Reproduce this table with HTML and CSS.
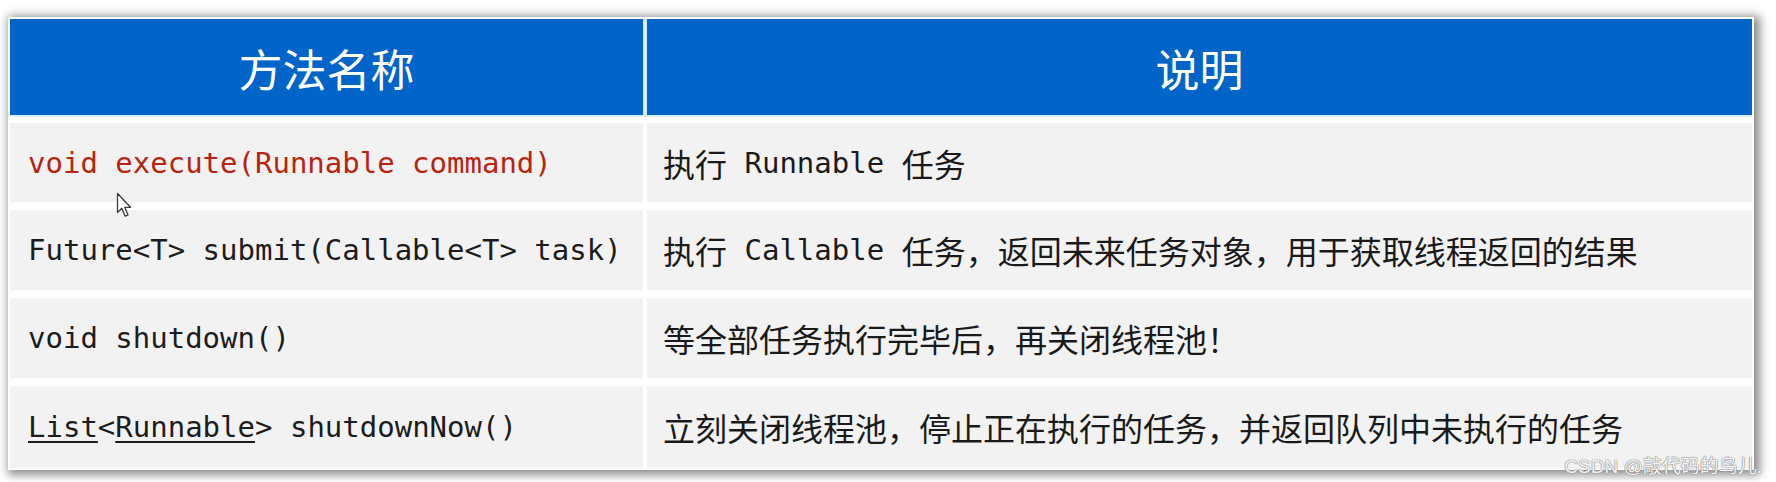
FILE: index.html
```html
<!DOCTYPE html>
<html lang="zh">
<head>
<meta charset="utf-8">
<title>线程池方法</title>
<link rel="stylesheet" href="styles.css">
</head>
<body>
<div class="page">
  <div class="table">
    <div class="row head">
      <div class="cell">方法名称</div>
      <div class="cell">说明</div>
    </div>
    <div class="row r1">
      <div class="cell code red">void execute(Runnable command)</div>
      <div class="cell desc">执行<span class="mono"> Runnable </span>任务</div>
    </div>
    <div class="row r2">
      <div class="cell code">Future&lt;T&gt; submit(Callable&lt;T&gt; task)</div>
      <div class="cell desc">执行<span class="mono"> Callable </span>任务，返回未来任务对象，用于获取线程返回的结果</div>
    </div>
    <div class="row r3">
      <div class="cell code">void shutdown()</div>
      <div class="cell desc">等全部任务执行完毕后，再关闭线程池！</div>
    </div>
    <div class="row r4">
      <div class="cell code"><span class="u">List</span>&lt;<span class="u">Runnable</span>&gt; shutdownNow()</div>
      <div class="cell desc">立刻关闭线程池，停止正在执行的任务，并返回队列中未执行的任务</div>
    </div>
  </div>
  <svg class="cursor" width="18" height="27" viewBox="0 0 18 27">
    <path d="M1.5 1.5 L1.5 20.5 L5.8 16.3 L9.2 24.2 L12 23 L8.7 15.3 L14.6 15.3 Z" fill="#ffffff" stroke="#3a3a3a" stroke-width="1.3" stroke-linejoin="round"/>
  </svg>
  <div class="watermark">CSDN @敲代码的鸟儿.</div>
</div>
</body>
</html>
```

FILE: styles.css
```css
html, body {
  margin: 0;
  padding: 0;
  background: #ffffff;
}

.page {
  position: relative;
  width: 1776px;
  height: 482px;
  box-sizing: border-box;
  padding: 17px 0 0 8px;
  overflow: hidden;
}

.table {
  width: 1746px;
  box-sizing: border-box;
  padding: 2px;
  background: #ffffff;
  display: flex;
  flex-direction: column;
  gap: 8px;
  box-shadow: 3px 2px 9px 3px rgba(0, 0, 0, 0.45);
}

.row {
  display: grid;
  grid-template-columns: 633px 1105px;
  column-gap: 4px;
}

.head {
  height: 96px;
  background: #d8ecfb;
  box-shadow: 0 2px 0 #dcefff;
}

.head .cell {
  background: #0064c8;
  color: #ffffff;
  justify-content: center;
  font-family: "Noto Sans CJK SC", "Noto Sans", sans-serif;
  font-size: 44px;
  padding-top: 2px;
}

.r1 { height: 79px; }
.r2 { height: 80px; }
.r3 { height: 80px; }
.r4 { height: 82px; }

.cell {
  display: flex;
  align-items: center;
  box-sizing: border-box;
  background: #f2f2f2;
  white-space: pre;
}

.code {
  padding-left: 18px;
  font-family: "DejaVu Sans Mono", "Liberation Mono", monospace;
  font-size: 29px;
  color: #1c1c1c;
}

.red {
  color: #b8240f;
}

.u {
  text-decoration: underline;
  text-underline-offset: 4px;
  text-decoration-thickness: 2px;
}

.desc {
  padding-left: 16px;
  font-family: "Noto Sans CJK SC", "Noto Sans", sans-serif;
  font-size: 32px;
  color: #1a1a1a;
}

.mono {
  font-family: "DejaVu Sans Mono", "Liberation Mono", monospace;
  font-size: 29px;
}

.cursor {
  position: absolute;
  left: 116px;
  top: 192px;
}

.watermark {
  position: absolute;
  right: 14px;
  top: 451px;
  font-family: "Liberation Sans", "Noto Sans CJK SC", sans-serif;
  font-size: 19px;
  color: #f4f4f4;
  text-shadow: 0 0 1px #888, 0 0 1px #888, 0 0 1px #888;
}
```
